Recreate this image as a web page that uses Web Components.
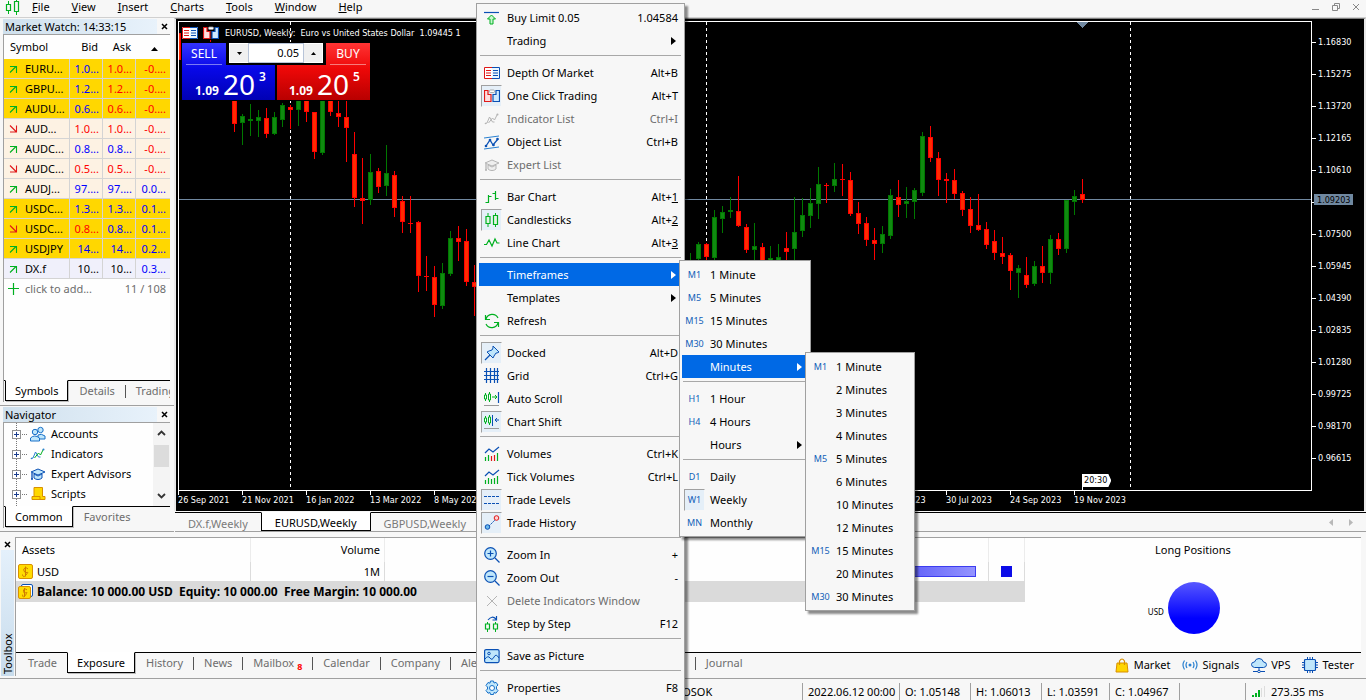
<!DOCTYPE html>
<html lang="en">
<head>
<meta charset="utf-8">
<title>EURUSD, Weekly</title>
<style>
  html, body { margin: 0; height: 100%; overflow: hidden; }
  body { font: 11px/16px "Noto Sans", "Open Sans", sans-serif; color: #000; background: #f7f7f7; }
</style>
</head>
<body>
<mt-app></mt-app>

<script>
const define = (name, css, html, setup) => {
  customElements.define(name, class extends HTMLElement {
    connectedCallback() {
      if (this.shadowRoot) return;
      const root = this.attachShadow({ mode: 'open' });
      const t = document.createElement('template');
      t.innerHTML = `<style>*{box-sizing:border-box}button,input{font:inherit;color:inherit;border:0;background:none;padding:0;margin:0}a{color:inherit;text-decoration:none}${css}</style>` +
        (typeof html === 'function' ? html(this) : html);
      root.append(t.content.cloneNode(true));
      if (setup) setup(this, root);
    }
  });
};

/* ---------- icons, 16x16 ---------- */
const G = '#00b020', B = '#0a50b4', L = '#bfe6fb', R = '#e01818', N = '#b4b4b4';
const line = (d, c, w = 1) => `<path d="${d}" fill="none" stroke="${c}" stroke-width="${w}"/>`;
const wave = (a, b) => line('M1 12.500l2-.5 2.500-6 3 5 2 0', a) + line('M4.500 12l4-5 2 2 3-6', b) + `<circle cx="1.500" cy="12.500" r=".8" fill="${a}"/><circle cx="13.500" cy="3.500" r="1" fill="${a}"/>`;
const cap = (s, f) => `<path d="M1 6l7-3 7 3-7 3z" fill="${f}" stroke="${s}"/><path d="M4 8v4c2 2 6 2 8 0V8l-4 2z" fill="${f}" stroke="${s}"/>` + line('M2 7v6M1 13h2', s, 1.3);
const book = bg => `<rect x="0" y="2" width="16" height="12" fill="${bg}"/><path d="M8 2.500H.5v11H8" fill="#fff" stroke="${R}"/><path d="M8 2.500h7.500v11H8" fill="#eaf6ff" stroke="${B}"/>` +
  line('M2 5.500h5M2 8h5M2 10.500h5', R) + line('M9 5.500h5M9 8h5M9 10.500h5', B);
const oneclick = `<path d="M.5 2.500h3.500v4h3v7H.5z" fill="#ffdede" stroke="${R}" stroke-width="1.200"/><path d="M15.500 2.500H12v4H9v7h6.500z" fill="#cfeaff" stroke="${B}" stroke-width="1.200"/><rect x="5.500" y="2" width="5" height="2.500" rx="1" fill="#fff" stroke="#999" stroke-width=".8"/>`;
const volumes = mid => line('M1 7l4-4 4 3 6-5', B, 1.2) + line('M1.500 15v-4M4.500 15V9M13.500 15V7', G, 1.2) + line('M7.500 15v-5M10.500 15V9', mid, 1.2);
const lens = mark => `<circle cx="6.500" cy="6.500" r="5.800" fill="${L}" stroke="${B}" stroke-width="1.200"/>` + line('M11 11l4.500 4.500', B, 1.300) + line(mark, B, 1.200);
const icons = {
  logo: line('M3.500 2v3M3.500 12v3M11.500 0v3M11.500 13v3', G) + `<path d="M1.500 5.500h4v6h-4zM9.500 2.500h4v10h-4z" fill="none" stroke="${G}" stroke-width="1.200"/>`,
  buylimit: line('M0 2.500h15', B, 1.2) + `<path d="M7.500 5l4 4h-2.500v5H6V9H3.500z" fill="#c8f5d0" stroke="${G}"/>`,
  book: book('none'), bookw: book('#fff'),
  oneclick,
  indicators: wave('#2a80d0', G), indicatorsoff: wave(N, N),
  objects: line('M0 4l15-2M0 15l15-2', '#2a80d0') + line('M2 12l4-6 3 5 5-6', B, 1.300) + `<g fill="${B}"><circle cx="2" cy="12" r="1.300"/><circle cx="6" cy="6" r="1.300"/><circle cx="9.500" cy="11" r="1.300"/><circle cx="13.500" cy="5" r="1.300"/></g>`,
  expert: cap(B, L), expertoff: cap(N, '#eee'),
  bar: line('M4.500 6v8M1.500 13.500h3M4.500 7.500h3M11.500 2v9M8.500 4.500h3M11.500 9.500h3', G, 1.2),
  candles: line('M4 1v3M4 12v3M11.500 1v2M11.500 13v2', G) + `<path d="M2 4.500h4v7H2zM9.500 3.500h4v9h-4z" fill="#dff5e2" stroke="${G}" stroke-width="1.200"/>`,
  linechart: line('M0 9.500h2.500L5 5l3 6 3-7 2 4h2.500', G, 1.2),
  refresh: line('M2 6a6.500 6.500 0 0 1 12-1M14 10a6.500 6.500 0 0 1-12 1M1.500 2v4.500h4.500M14.500 14V9.500H10', G, 1.200),
  pin: line('M1 15l5-5', B, 1.2) + `<path d="M9 1l6 6-2 1-1 0-2 3-1 2-6-6 2-1 3-1 1-2z" fill="${L}" stroke="${B}"/>`,
  grid: line('M0 3.500h15M0 7.500h15M0 11.500h15M2.500 0v15M6.500 0v15M10.500 0v15M13.500 0v15', B, 1.200),
  scroll: line('M1.500 2v8M5.500 1v10M8 6h5M11 4l2 2-2 2', G) + `<path d="M.5 4h2v4h-2zM4.500 3h2v6h-2z" fill="#fff" stroke="${G}"/>` + line('M14.500 1v11', B, 1.200) + line('M0 14.500h15', '#999'),
  shift: line('M1.500 2v8M5.500 1v10', G) + `<path d="M.5 4h2v4h-2zM4.500 3h2v6h-2z" fill="#fff" stroke="${G}"/>` + line('M8.500 1v11M15 6h-4M13 4l-2 2 2 2', B) + line('M0 14.500h15', '#999'),
  volumes: volumes(R), tickvolumes: volumes(G),
  levels: `<g stroke-dasharray="3 1">${line('M0 4.500h16M0 11.500h16', B)}</g>`,
  history: `<g stroke-dasharray="2 1">${line('M5 11l6-6', B)}</g><circle cx="12.500" cy="3" r="2.300" fill="#ffd0d0" stroke="${R}"/><circle cx="3.500" cy="12" r="2.300" fill="#6ab8ec" stroke="${B}"/>`,
  zoomin: lens('M3.500 6.500h6M6.500 3.500v6'), zoomout: lens('M3.500 6.500h6'),
  del: line('M3 3l10 10M13 3L3 13', N),
  step: line('M4 4q4-5 8-1M12.500 0v4h-4', B, 1.2) + line('M3.500 6v2M3.500 13v3M11.500 6v2M11.500 13v3', G) + `<path d="M1.500 8h4v5h-4zM9.500 8h4v5h-4z" fill="none" stroke="${G}" stroke-width="1.2"/>`,
  picture: `<rect x=".6" y="1.600" width="14.500" height="13" rx="1.500" fill="${L}" stroke="${B}" stroke-width="1.200"/>` + line('M1 11q3-4 5-1t4-1 5 1', B) + `<circle cx="5" cy="5.500" r="1.300" fill="none" stroke="${B}"/>`,
  gear: `<path d="M6.500 1h3l.5 2 2-.7 2 2.700-1.500 1.500V9l1.500 1.500-2 2.700-2-.700-.5 2h-3l-.5-2-2 .7-2-2.700L3.500 9V7L2 5.500l2-3 2 .7z" fill="${L}" stroke="#1870c8"/><circle cx="8" cy="8" r="2.500" fill="#fff" stroke="#1870c8"/>`,
  up: line('M3 11.500l6-6M3 5.500h6.500V12', G, 1.1), down: line('M3 4.500l6 6M3 11h6.500V4.500', R, 1.1),
  plus: line('M7.500 2v12M2 7.500h11', G, 1.2),
  accounts: `<g fill="${L}" stroke="#1870c8"><circle cx="10.500" cy="4" r="2.700"/><path d="M8 13V9q3-2 7 1v3z"/><circle cx="5" cy="6" r="2.700"/><path d="M.5 15v-3q4-4 9 0v3z"/></g>`,
  script: `<path d="M4 1.500h8.500v9H15v3H2v-3h2z" fill="#ffd800" stroke="#d89000"/>` + line('M4 10.500h6v3', '#d89000'),
  service: `<circle cx="8" cy="8" r="6.500" fill="${L}" stroke="${B}"/>`,
  coin: `<rect x=".5" y=".5" width="14" height="14" rx="1.500" fill="#ffdc00" stroke="#d89000"/><path d="M10 5q-1-1.500-3-1T6 7t3 1.500-1 2.500-3.500-.5M7.500 2.500v10" fill="none" stroke="#d07c00"/>`,
  coins: `<rect x="3.500" y=".5" width="11" height="12" rx="1.500" fill="#fff" stroke="${B}"/><rect x=".5" y="2.500" width="12" height="12" rx="1.500" fill="#ffdc00" stroke="#d89000"/><path d="M9 6q-1-1.300-2.500-1t-1 2.700 2.500 1-.5 2.500-3-.5M6.500 4v9" fill="none" stroke="#d07c00"/>`,
  bag: `<path d="M3 6h10l1 9H2z" fill="#ffd400" stroke="#d89000"/>` + line('M5.500 8V4q2.500-4 5 0v4', '#d89000', 1.200),
  signals: `<circle cx="8" cy="8" r="1.500" fill="#2a80d0"/>` + line('M5 5q-2 3 0 6M11 5q2 3 0 6M2.500 3.500q-3 4.500 0 9M13.500 3.500q3 4.500 0 9', '#2a80d0', 1.200),
  cloud: `<path d="M3.500 10.500q-3-.5-3-3t3-2.500q1-3.500 4.500-3.500T12.500 5q3 .2 3 2.700t-3 2.800z" fill="${L}" stroke="${B}"/>` + line('M8 11v3M2 14.500h12', B) + `<circle cx="8" cy="14.500" r="1.300" fill="#fff" stroke="${B}"/>`,
  chip: line('M5.500 0v16M8 0v16M10.500 0v16M0 5.500h16M0 8h16M0 10.500h16', B) + `<rect x="2.500" y="2.500" width="11" height="11" rx="1" fill="${L}" stroke="${B}" stroke-width="1.200"/>`,
  signal: `<path d="M1 11h2v2H1zM4 9h2v4H4zM7 6h2v7H7z" fill="${G}"/><path d="M10 4h1v9h-1zM13 2h1v11h-1z" fill="#ddd"/>`,
};
define('mt-icon', ':host{display:inline-block;width:16px;height:16px;flex:none}svg{display:block}',
  el => `<svg width="16" height="16" viewBox="0 0 16 16" aria-hidden="true">${icons[el.getAttribute('name')] || ''}</svg>`);

/* ---------- menus ---------- */
define('mt-menu',
  `:host{display:block;width:var(--menu-width);padding:2px;border:1px solid #a0a0a0;background:#f7f7f7;box-shadow:3px 3px 2px rgba(0,0,0,.45);color:#000}`,
  '<div role="menu"><slot></slot></div>');
define('mt-separator', ':host{display:block;height:9px;padding:3px 1px 0}div{border-top:1px solid #a8a8a8}', '<div></div>');
define('mt-item',
  `:host{display:block;position:relative}
   button{display:flex;align-items:center;width:100%;height:23px;text-align:left;white-space:nowrap;padding:0 4px 0 2px}
   .mark{display:flex;align-items:center;justify-content:center;width:21px;height:22px;margin-right:5px;color:#1060b8;font-size:9px;flex:none}
   :host([checked]) .mark{background:#e5eff8;border:1px solid #a0a0a0;border-right-color:#f7f7f7;border-bottom-color:#f7f7f7}
   .label{flex:1}
   .arrow{width:0;border:4px solid transparent;border-left:5px solid;border-right:0;margin-right:2px}
   :host([disabled]) button{color:#6d6d6d}
   :host([open])>button{background:#0069e5;color:#fff}
   ::slotted(mt-menu){position:absolute;z-index:1;left:calc(100% - 3px);top:-3px}`,
  el => {
    const a = n => el.getAttribute(n) || '';
    const mark = a('icon') ? `<mt-icon name="${a('icon')}"></mt-icon>` : a('tag');
    const keys = a('keys').replace(/_(.)/, '<u>$1</u>');
    return `<button type="button" role="menuitem"${el.hasAttribute('disabled') ? ' disabled' : ''}>
      <span class="mark">${mark}</span><span class="label">${a('label')}</span>
      ${keys ? `<span>${keys}</span>` : ''}${el.hasAttribute('arrow') ? '<span class="arrow"></span>' : ''}</button><slot></slot>`;
  });
const item = (label, icon = '', keys = '', flags = '') => `<mt-item label="${label}" icon="${icon}" keys="${keys}" ${flags}></mt-item>`;
const period = (label, tag = '', flags = '') => `<mt-item label="${label}" tag="${tag}" ${flags}></mt-item>`;
const sep = '<mt-separator></mt-separator>';
define('mt-context-menu', ':host{display:block}mt-menu{--menu-width:209px}.frames{--menu-width:132px}.minutes{--menu-width:110px}', `
 <mt-menu>
  ${item('Buy Limit 0.05', 'buylimit', '1.04584')}${item('Trading', '', '', 'arrow')}${sep}
  ${item('Depth Of Market', 'book', 'Alt+B')}${item('One Click Trading', 'oneclick', 'Alt+T', 'checked')}${item('Indicator List', 'indicatorsoff', 'Ctrl+I', 'disabled')}${item('Object List', 'objects', 'Ctrl+B')}${item('Expert List', 'expertoff', '', 'disabled')}${sep}
  ${item('Bar Chart', 'bar', 'Alt+_1')}${item('Candlesticks', 'candles', 'Alt+_2', 'checked')}${item('Line Chart', 'linechart', 'Alt+_3')}${sep}
  <mt-item label="Timeframes" arrow open>
   <mt-menu class="frames">
    ${period('1 Minute', 'M1')}${period('5 Minutes', 'M5')}${period('15 Minutes', 'M15')}${period('30 Minutes', 'M30')}
    <mt-item label="Minutes" arrow open>
     <mt-menu class="minutes">
      ${period('1 Minute', 'M1')}${period('2 Minutes')}${period('3 Minutes')}${period('4 Minutes')}${period('5 Minutes', 'M5')}${period('6 Minutes')}${period('10 Minutes')}${period('12 Minutes')}${period('15 Minutes', 'M15')}${period('20 Minutes')}${period('30 Minutes', 'M30')}
     </mt-menu>
    </mt-item>${sep}
    ${period('1 Hour', 'H1')}${period('4 Hours', 'H4')}${period('Hours', '', 'arrow')}${sep}
    ${period('Daily', 'D1')}${period('Weekly', 'W1', 'checked')}${period('Monthly', 'MN')}
   </mt-menu>
  </mt-item>
  ${item('Templates', '', '', 'arrow')}${item('Refresh', 'refresh')}${sep}
  ${item('Docked', 'pin', 'Alt+D', 'checked')}${item('Grid', 'grid', 'Ctrl+G')}${item('Auto Scroll', 'scroll')}${item('Chart Shift', 'shift', '', 'checked')}${sep}
  ${item('Volumes', 'volumes', 'Ctrl+K')}${item('Tick Volumes', 'tickvolumes', 'Ctrl+L')}${item('Trade Levels', 'levels', '', 'checked')}${item('Trade History', 'history', '', 'checked')}${sep}
  ${item('Zoom In', 'zoomin', '+')}${item('Zoom Out', 'zoomout', '-')}${item('Delete Indicators Window', 'del', '', 'disabled')}${item('Step by Step', 'step', 'F12')}${sep}
  ${item('Save as Picture', 'picture')}${sep}
  ${item('Properties', 'gear', 'F8')}
 </mt-menu>`);

/* ---------- menu bar ---------- */
define('mt-menubar',
  `:host{display:flex;align-items:center;height:14px;padding:0 5px;margin-bottom:3px}
   nav{display:flex;gap:22px;flex:1;padding-left:11px}button{line-height:14px}
   .win{display:flex;gap:10px}svg{display:block}`,
  `<mt-icon name="logo"></mt-icon><nav>${['File', 'View', 'Insert', 'Charts', 'Tools', 'Window', 'Help'].map(t => `<button type="button"><u>${t[0]}</u>${t.slice(1)}</button>`).join('')}</nav>
   <div class="win">
    <button type="button" aria-label="Minimize"><svg width="10" height="10"><path d="M1 7.500h7" stroke="#888"/></svg></button>
    <button type="button" aria-label="Restore"><svg width="10" height="10"><path d="M3.500 3V1.500h5v5H7M1.500 3.500h5v5h-5z" fill="none" stroke="#888"/></svg></button>
    <button type="button" aria-label="Close"><svg width="10" height="10"><path d="M2 2l6 6M8 2L2 8" stroke="#888"/></svg></button>
   </div>`);

/* ---------- tab strip: black rule, the active tab hangs from it ---------- */
define('mt-tabs',
  `:host{display:flex;overflow:hidden;height:22px}
   .lead{width:1px;border-top:1px solid #000;flex:none}
   button{height:20px;padding:0 10px 0 11px;border-top:1px solid #000;color:#6d6d6d;white-space:nowrap;flex:none;line-height:18px}
   button[aria-selected=true]{border:1px solid #000;border-top-color:#fff;background:#fff;color:#000;height:21px;padding:0 9px;box-shadow:1px 1px #bbb}
   button.div{background:linear-gradient(#555,#555) 0 4px/1px 13px no-repeat}
   .rest{flex:1;border-top:1px solid #000}
   sub{color:#f00;font-weight:bold;font-size:9px;line-height:9px;margin-left:3px}`,
  el => {
    const tabs = el.getAttribute('tabs').split('|'), on = +el.getAttribute('active');
    return '<span class="lead"></span>' + tabs.map((t, i) =>
      `<button type="button" role="tab" aria-selected="${i === on}" class="${i > on + 1 ? 'div' : ''}">${t.replace(/#(\d+)/, '<sub>$1</sub>')}</button>`).join('') + '<span class="rest"></span>';
  });

/* ---------- docked panel ---------- */
define('mt-panel',
  `:host{display:flex;flex-direction:column;padding:1px 4px 3px 3px;border-bottom:1px solid #a0a0a0}
   header{display:flex;justify-content:space-between;height:15px;line-height:15px}
   h2{margin:0 2px 0 0;font:inherit;line-height:15px;flex:1;padding-left:2px;background:linear-gradient(90deg,#cfe0ed,#e8f2fb)}
   header button{width:11px;line-height:0;display:flex;align-items:center;justify-content:center}
   .body{flex:1;min-height:0;background:#fefefe;border:1px solid #a0a0a0;border-width:1px 0 0 1px;overflow:hidden}
   mt-tabs{border-left:1px solid #a0a0a0}`,
  el => `<header><h2>${el.getAttribute('heading')}</h2><button type="button" aria-label="Close"><svg width="7" height="7"><path d="M1 1l5 5M6 1L1 6" stroke="#000" stroke-width="1.500"/></svg></button></header>
   <div class="body"><slot></slot></div><mt-tabs tabs="${el.getAttribute('tabs')}" active="0"></mt-tabs>`);

const quotes = [
  ['up', 'EURU...', '1.0...', '1.0...', '-0....', 'gold', 'brr'], ['up', 'GBPU...', '1.2...', '1.2...', '-0....', 'gold', 'brr'],
  ['up', 'AUDU...', '0.6...', '0.6...', '-0....', 'gold', 'brr'], ['down', 'AUD...', '1.0...', '1.0...', '-0....', 'warm', 'rrr'],
  ['up', 'AUDC...', '0.8...', '0.8...', '-0....', 'warm', 'bbr'], ['down', 'AUDC...', '0.5...', '0.5...', '-0....', 'warm', 'rrr'],
  ['up', 'AUDJ...', '97....', '97....', '0.0...', 'warm', 'bbb'], ['up', 'USDC...', '1.3...', '1.3...', '0.1...', 'gold', 'bbb'],
  ['down', 'USDC...', '0.8...', '0.8...', '0.1...', 'gold', 'rbb'], ['up', 'USDJPY', '14...', '14...', '0.2...', 'gold', 'bbb'],
  ['up', 'DX.f', '10...', '10...', '0.3...', 'cool', 'kkb']];
define('mt-market-watch',
  `:host{display:block}
   table{border-collapse:separate;border-spacing:0;table-layout:fixed;width:100%}
   th{height:24px;font-weight:normal;padding:0 5px 0 0;text-align:right}th:first-child{text-align:left;padding-left:6px}
   .s{width:66px}.p{width:33px}
   td{height:20px;padding:0 3px 0 0;text-align:right;white-space:nowrap;overflow:hidden;border-bottom:1px solid #d4d4d4;border-right:1px solid #d4d4d4;line-height:19px}
   td:last-child{padding-right:4px;border-right:0}
   td:first-child{padding:0 0 0 3px;text-align:left}.row{display:flex;align-items:center;gap:2px;height:19px}
   .gold{background:#ffd700}.warm{background:#fdf2e3}.cool{background:#f0f0fb}
   .r{color:#f00}.b{color:#00f}.k{color:#000}
   svg{display:inline-block}
   .add{display:flex;align-items:center;gap:3px;height:20px;padding:0 4px 0 2px;color:#6d6d6d}.add button{flex:1;text-align:left}`,
  `<table><thead><tr><th class="s">Symbol</th><th class="p">Bid</th><th class="p">Ask</th><th style="padding-right:12px" aria-label="Daily change"><svg width="7" height="4"><path d="M0 4l3.500-4L7 4z"/></svg></th></tr></thead><tbody>` +
  quotes.map(([d, s, bid, ask, ch, bg, c]) => `<tr class="${bg}"><td><div class="row"><mt-icon name="${d}"></mt-icon>${s}</div></td><td class="${c[0]}">${bid}</td><td class="${c[1]}">${ask}</td><td class="${c[2]}">${ch}</td></tr>`).join('') +
  `</tbody></table><div class="add"><mt-icon name="plus"></mt-icon><button type="button">click to add...</button><span>11 / 108</span></div>`);

define('mt-navigator',
  `:host{display:flex;height:83px;overflow:hidden}
   ul{list-style:none;margin:0;padding:1px 0 0 8px;flex:1;background:repeating-linear-gradient(#777 0 1px,transparent 1px 2px) 12px 0/1px 100% no-repeat}
   li{display:flex;align-items:center;height:20px;white-space:nowrap}
   li button{width:9px;height:9px;border:1px solid #919191;background:linear-gradient(#1a3c8c,#1a3c8c) center/5px 1px no-repeat,linear-gradient(#1a3c8c,#1a3c8c) center/1px 5px no-repeat,#fff}
   i{width:6px;height:1px;margin:0 2px 0 1px;background:repeating-linear-gradient(90deg,#777 0 1px,transparent 1px 2px)}
   li span{margin-left:5px}
   .bar{width:17px;padding-right:1px;background:#f4f4f4;display:flex;flex-direction:column;align-items:center}
   .bar button{height:20px;width:16px;display:flex;align-items:center;justify-content:center}
   .thumb{width:15px;height:22px;margin-top:2px;background:#dcdcdc}.track{flex:1}`,
  `<ul>${[['accounts', 'Accounts'], ['indicators', 'Indicators'], ['expert', 'Expert Advisors'], ['script', 'Scripts']].map(([i, t]) =>
    `<li><button type="button" aria-label="Expand ${t}"></button><i></i><mt-icon name="${i}"></mt-icon><span>${t}</span></li>`).join('')}<li><button type="button" aria-label="Expand"></button><i></i><mt-icon name="service"></mt-icon></li></ul>
   <div class="bar"><button type="button" aria-label="Scroll up"><svg width="9" height="6"><path d="M1 5l3.500-3.500L8 5" fill="none" stroke="#333" stroke-width="1.800"/></svg></button><span class="thumb"></span><span class="track"></span>
   <button type="button" aria-label="Scroll down"><svg width="9" height="6"><path d="M1 1l3.500 3.500L8 1" fill="none" stroke="#333" stroke-width="1.800"/></svg></button></div>`);

/* ---------- one-click trading panel ---------- */
define('mt-quick-trade',
  `:host{display:block;position:relative;width:188px;height:57px;color:#fff;outline:1px solid #000;background:#000;font:12px/16px "Noto Sans","Open Sans",sans-serif}
   .deal{display:grid;grid-template-columns:1fr 1fr}
   .deal button{height:57px;position:relative;text-align:left;display:flex;flex-direction:column}
   .sell{background:linear-gradient(#3333ff,#0808e8 45%,#0000b4);clip-path:polygon(0 0,44px 0,44px 22px,93px 22px,93px 100%,0 100%)}
   .buy{background:linear-gradient(#ff3434,#ee0808 45%,#b80000);clip-path:polygon(50px 0,94px 0,94px 100%,1px 100%,1px 22px,50px 22px)}
   .side{width:36px;margin:0 4px;height:22px;line-height:22px;text-align:center;border-bottom:1px solid rgba(255,255,255,.45);font-size:12px}
   .buy .side{align-self:flex-end}
   .price{display:flex;align-items:flex-end;gap:4px;padding-left:13px;height:35px;line-height:30px}
   b{font-size:12px;line-height:18px}
   .big{font-size:28px;line-height:32px}.pip{font-weight:600;font-size:12px;align-self:flex-start;line-height:24px}
   .lot{position:absolute;left:47px;top:0;width:94px;height:20px;display:grid;grid-template-columns:18px 1fr 18px;border:1px solid #fff;background:#fff;gap:1px}
   .lot button{background:#f0f0f0;display:flex;align-items:center;justify-content:center}
   input{width:100%;min-width:0;background:#fff;color:#000;font-size:11px;text-align:right;padding-right:4px;outline:1px solid #b8c4d8}`,
  `<div class="deal">
    <button type="button" class="sell"><span class="side">SELL</span><span class="price"><b>1.09</b><span class="big">20</span><span class="pip">3</span></span></button>
    <button type="button" class="buy"><span class="side">BUY</span><span class="price"><b>1.09</b><span class="big">20</span><span class="pip">5</span></span></button>
   </div>
   <div class="lot"><button type="button" aria-label="Decrease volume"><svg width="5" height="3"><path d="M0 0h5L2.500 3z"/></svg></button>
    <input type="text" value="0.05" aria-label="Volume">
    <button type="button" aria-label="Increase volume"><svg width="5" height="3"><path d="M0 3h5L2.500 0z"/></svg></button></div>`);

/* ---------- chart ---------- */
/* each run: first x, then [high, body top, body bottom, low, up?] every 8px */
const runs = [
  [178, [[33, 33, 60, 60, 0]]], [210, [[40, 42, 42, 42, 0]]],
  [234, [[60, 90, 124, 131, 0], [114, 116, 123, 144, 1], [104, 119, 121, 135, 1], [110, 117, 121, 136, 1], [108, 118, 134, 137, 0], [112, 117, 134, 134, 1], [103, 105, 120, 126, 1], [105, 107, 110, 128, 0], [90, 95, 110, 125, 1], [85, 90, 112, 121, 0], [112, 112, 152, 158, 0], [80, 90, 153, 154, 1], [80, 90, 112, 115, 0], [90, 113, 117, 126, 0], [90, 117, 128, 161, 0], [132, 154, 198, 206, 0], [158, 198, 201, 223, 0], [154, 172, 200, 204, 1], [168, 171, 187, 192, 0], [145, 173, 186, 195, 1], [171, 175, 208, 216, 0], [196, 201, 222, 232, 0], [196, 223, 224, 232, 0], [221, 222, 276, 291, 0], [256, 276, 277, 290, 0], [266, 277, 305, 316, 0], [263, 273, 306, 308, 1], [231, 238, 274, 275, 1], [226, 238, 242, 260, 0], [229, 241, 282, 285, 0], [265, 282, 287, 315, 0]]],
  [690, [[253, 264, 270, 275, 1], [242, 244, 259, 265, 1], [243, 244, 257, 265, 0], [210, 217, 258, 259, 1], [206, 212, 219, 232, 1], [197, 210, 212, 217, 1], [176, 211, 226, 226, 0], [224, 227, 250, 252, 0], [223, 246, 250, 262, 1], [243, 247, 264, 266, 0], [246, 258, 262, 266, 1], [244, 257, 262, 266, 1], [232, 248, 252, 262, 0], [197, 232, 249, 259, 1], [198, 215, 231, 236, 1], [188, 203, 216, 227, 1], [167, 184, 204, 218, 1], [183, 185, 186, 202, 0], [163, 179, 186, 191, 1], [164, 179, 180, 195, 0], [172, 180, 214, 215, 0], [202, 213, 224, 233, 0], [217, 223, 240, 245, 0], [228, 240, 244, 259, 0], [226, 234, 244, 252, 1], [189, 195, 236, 238, 1], [180, 197, 205, 216, 0], [187, 201, 204, 217, 1], [188, 190, 202, 218, 1], [132, 136, 193, 195, 1], [126, 137, 158, 161, 0], [152, 158, 180, 195, 0], [173, 179, 181, 202, 0], [169, 180, 194, 198, 0], [191, 193, 210, 215, 0], [197, 209, 226, 232, 0], [194, 225, 230, 230, 0], [222, 229, 245, 248, 0], [230, 241, 253, 259, 0], [237, 253, 257, 263, 0], [253, 255, 271, 289, 0], [265, 268, 273, 297, 1], [257, 275, 285, 287, 0], [261, 266, 284, 285, 1], [246, 266, 273, 282, 0], [235, 239, 273, 283, 1], [233, 239, 249, 254, 0], [200, 200, 249, 252, 1], [190, 196, 202, 214, 1], [179, 194, 200, 202, 0]]]];
const candles = runs.map(([x0, list]) => list.map(([h, t, b, l, up], i) => {
  const x = x0 + i * 8, edge = up ? '#007800' : '#ff0000', fill = up ? '#108a10' : '#ff2a00';
  return `<path d="M${x + .5} ${h}V${l + 1}" stroke="${edge}"/>` + (b - t < 2
    ? `<rect x="${x - 2}" y="${t}" width="5" height="${Math.max(1, b - t)}" fill="${edge}"/>`
    : `<rect x="${x - 1.5}" y="${t + .5}" width="4" height="${b - t - 1}" fill="${fill}" stroke="${edge}"/>`);
}).join('')).join('');
const dates = ['26 Sep 2021', '21 Nov 2021', '16 Jan 2022', '13 Mar 2022', '8 May 2022', '', '', '', '', '', '', '4 Jun 2023', '30 Jul 2023', '24 Sep 2023', '19 Nov 2023'];
const prices = ['1.16830', '1.15275', '1.13720', '1.12165', '1.10610', '1.09055', '1.07500', '1.05945', '1.04390', '1.02835', '1.01280', '0.99725', '0.98170', '0.96615'];
define('mt-chart',
  `:host{display:grid;grid-template:1fr 20px/1fr 52px;min-height:0;padding:2px 0 0 2px;background:#000;color:#fff;border:1px solid #a0a0a0;border-width:1px 2px 0 2px;border-color:#808080 #e8e8e8;font:9px/12px "DejaVu Sans Condensed","DejaVu Sans",sans-serif}
   .plot{position:relative;border:1px solid #fff;overflow:hidden;min-width:0;min-height:0}
   .plot svg.c{position:absolute;inset:0;width:100%;height:100%;shape-rendering:crispEdges}
   .over{position:relative;padding:3px 0 0 3px}
   .title{display:flex;align-items:center;gap:5px;height:16px;white-space:pre;margin-bottom:2px}
   .title span{margin-left:1px}
   .tag{position:absolute;left:903px;bottom:3px;background:#fff;color:#000;line-height:13px;padding:0 4px 0 2px;clip-path:polygon(0 0,calc(100% - 3px) 0,100% 50%,calc(100% - 3px) 100%,0 100%)}
   .x{grid-column:1/3;display:flex;overflow:hidden}
   .x span{flex:0 0 64px;white-space:nowrap;padding-top:3px;background:linear-gradient(#fff,#fff) 0 0/1px 4px no-repeat}
   .y{position:relative;padding-top:5px;overflow:hidden}
   .y div{height:32px;display:flex;align-items:center;gap:2px}.y div::before{content:"";width:4px;height:1px;background:#fff}
   .y output{position:absolute;left:2px;top:173px;width:39px;height:11px;line-height:12px;padding-left:3px;background:#7088a0;color:#000}`,
  `<div class="plot"><svg class="c"><g transform="translate(-179,-22)">
     <path d="M290.500 22V491M706.500 22V491M1130.500 22V491" stroke="#fff" stroke-dasharray="3 3"/>
     <path d="M178 199.500H1400" stroke="#7088a0"/>${candles}
     <path d="M1077 22h11l-5.500 6z" fill="#7088a0"/><path d="M1082.500 486V491" stroke="#fff"/></g></svg>
    <div class="over"><div class="title"><mt-icon name="bookw"></mt-icon><mt-icon name="oneclick"></mt-icon><span>EURUSD, Weekly:  Euro vs United States Dollar  1.09445 1</span></div><mt-quick-trade></mt-quick-trade></div>
    <span class="tag">20:30</span></div>
   <div class="y">${prices.map(p => `<div>${p}</div>`).join('')}<output>1.09203</output></div>
   <div class="x">${dates.map(d => `<span>${d}</span>`).join('')}</div>`);

define('mt-chart-tabs',
  `:host{display:flex;height:20px;margin:1px 0 0 1px;border-bottom:1px solid #a0a0a0}
   button{padding:2px 13px 0;color:#7a7a7a;border-top:1px solid #000;line-height:17px}
   button:first-child{border-left:1px solid #a0a0a0;padding-left:12px}
   button[aria-selected=true]{border:1px solid #000;border-top-color:#fff;background:#fff;color:#000;line-height:15px}
   .rest{flex:1;border-top:1px solid #000;display:flex;justify-content:flex-end;align-items:center;gap:16px;padding-right:13px}
   .rest button{padding:0;border:0;line-height:0}`,
  `<button type="button" role="tab">DX.f,Weekly</button><button type="button" role="tab" aria-selected="true">EURUSD,Weekly</button><button type="button" role="tab">GBPUSD,Weekly</button>
   <div class="rest"><button type="button" aria-label="Scroll tabs left"><svg width="4" height="7"><path d="M4 0v7L0 3.500z" fill="#b8b8b8"/></svg></button><button type="button" aria-label="Scroll tabs right"><svg width="4" height="7"><path d="M0 0v7l4-3.500z" fill="#b8b8b8"/></svg></button></div>`);

/* ---------- toolbox ---------- */
define('mt-toolbox',
  `:host{display:grid;grid-template-columns:15px 1fr;padding:3px 5px 2px 0}
   aside{display:flex;flex-direction:column;align-items:center;padding:1px 1px 0 1px}
   aside button{height:12px;line-height:0}
   aside div{flex:1;width:13px;background:linear-gradient(#c8dcec,#e4f0fb);writing-mode:vertical-rl;transform:rotate(180deg);line-height:13px;padding-top:2px;text-align:left}
   main{display:flex;flex-direction:column;min-width:0;border:1px solid #a0a0a0;border-width:1px 0 0 1px}
   .body{display:grid;grid-template-columns:3fr 1fr;min-height:114px;background:#fefefe}
   table{width:100%;table-layout:fixed;border-spacing:0;align-self:start}
   th{font-weight:normal;height:24px;text-align:left;padding:0 6px;border-right:1px solid #ececec}
   th+th,td+td{text-align:right;padding:0 4px}
   td{height:19px;padding:0 2px;border-right:1px solid #dcdcdc}
   .total td{height:21px;background:#dadada;font-size:12px;font-weight:bold;white-space:pre;border:0;text-align:left}
   .cell{display:flex;align-items:center;gap:3px}
   .bar{display:block;height:11px;width:150px;margin:0 8px 0 auto;border:1px solid #3c3cf0;background:linear-gradient(90deg,#2020f0,#9494ff)}
   .dot{display:block;width:11px;height:11px;margin:0 auto;background:#0c0ce8}
   figure{margin:0;padding-top:4px;display:flex;flex-direction:column;align-items:center;gap:24px}
   .pie{display:flex;align-items:center;gap:4px;font-size:8px;margin-right:18px}
   .pie span{padding-top:8px}
   .pie i{width:52px;height:52px;border-radius:50%;background:linear-gradient(#5858ff,#0000ff 70%)}
   footer{display:flex}mt-tabs{flex:1;height:24px}
   nav{display:flex;align-items:center;gap:12px;padding:1px 7px 0 0;border-top:1px solid #000}
   nav a{display:flex;align-items:center;gap:4px}`,
  `<aside><button type="button" aria-label="Close"><svg width="7" height="7"><path d="M1 1l5 5M6 1L1 6" stroke="#000" stroke-width="1.500"/></svg></button><div>Toolbox</div></aside>
   <main><div class="body">
    <table><colgroup><col style="width:235px"><col style="width:134px"><col><col style="width:36px"></colgroup>
     <thead><tr><th>Assets</th><th>Volume</th><th></th><th></th></tr></thead>
     <tbody><tr><td><div class="cell"><mt-icon name="coin"></mt-icon>USD</div></td><td>1M</td><td><span class="bar"></span></td><td><span class="dot"></span></td></tr>
     <tr class="total"><td colspan="4"><div class="cell"><mt-icon name="coins"></mt-icon>Balance: 10 000.00 USD  Equity: 10 000.00  Free Margin: 10 000.00</div></td></tr></tbody></table>
    <figure><figcaption>Long Positions</figcaption><div class="pie"><span>USD</span><i></i></div></figure>
   </div>
   <footer><mt-tabs tabs="Trade|Exposure|History|News|Mailbox#8|Calendar|Company|Alerts|Articles|Code Base|Experts|Journal" active="1"></mt-tabs>
    <nav><a href="#market"><mt-icon name="bag"></mt-icon>Market</a><a href="#signals"><mt-icon name="signals"></mt-icon>Signals</a><a href="#vps"><mt-icon name="cloud"></mt-icon>VPS</a><a href="#tester"><mt-icon name="chip"></mt-icon>Tester</a></nav></footer></main>`);

define('mt-statusbar',
  `:host{display:grid;grid-template-columns:49.5% 1fr 97px 71px 71px 68px 70px 66px 121px;height:22px;border-top:1px solid #a0a0a0;padding-top:4px}
   span{border-left:1px solid #a0a0a0;padding-left:5px;line-height:17px;white-space:nowrap}
   span:nth-child(-n+2){border:0;padding-left:1px}
   span:last-child{display:flex;align-items:center;gap:4px}`,
  `<span></span><span>OSOK</span><span>2022.06.12 00:00</span><span>O: 1.05148</span><span>H: 1.06013</span><span>L: 1.03591</span><span>C: 1.04967</span><span></span><span><mt-icon name="signal"></mt-icon>273.35 ms</span>`);

define('mt-app',
  `:host{display:flex;flex-direction:column;height:100vh;position:relative;overflow:hidden}
   .work{flex:1;display:flex;min-height:0;border-top:1px solid #d0d0d0;padding-bottom:2px}
   .dock{width:174px;display:flex;flex-direction:column;flex:none}
   .dock mt-panel:first-child{flex:1;min-height:0}
   .view{flex:1;display:flex;flex-direction:column;min-width:0}mt-chart{flex:1}
   mt-context-menu{position:absolute;left:476px;top:3px}`,
  `<mt-menubar></mt-menubar>
   <div class="work"><div class="dock">
     <mt-panel heading="Market Watch: 14:33:15" tabs="Symbols|Details|Trading"><mt-market-watch></mt-market-watch></mt-panel>
     <mt-panel heading="Navigator" tabs="Common|Favorites"><mt-navigator></mt-navigator></mt-panel>
   </div><div class="view"><mt-chart></mt-chart><mt-chart-tabs></mt-chart-tabs></div></div>
   <mt-toolbox></mt-toolbox><mt-statusbar></mt-statusbar>
   <mt-context-menu></mt-context-menu>`);
</script>
</body>
</html>
